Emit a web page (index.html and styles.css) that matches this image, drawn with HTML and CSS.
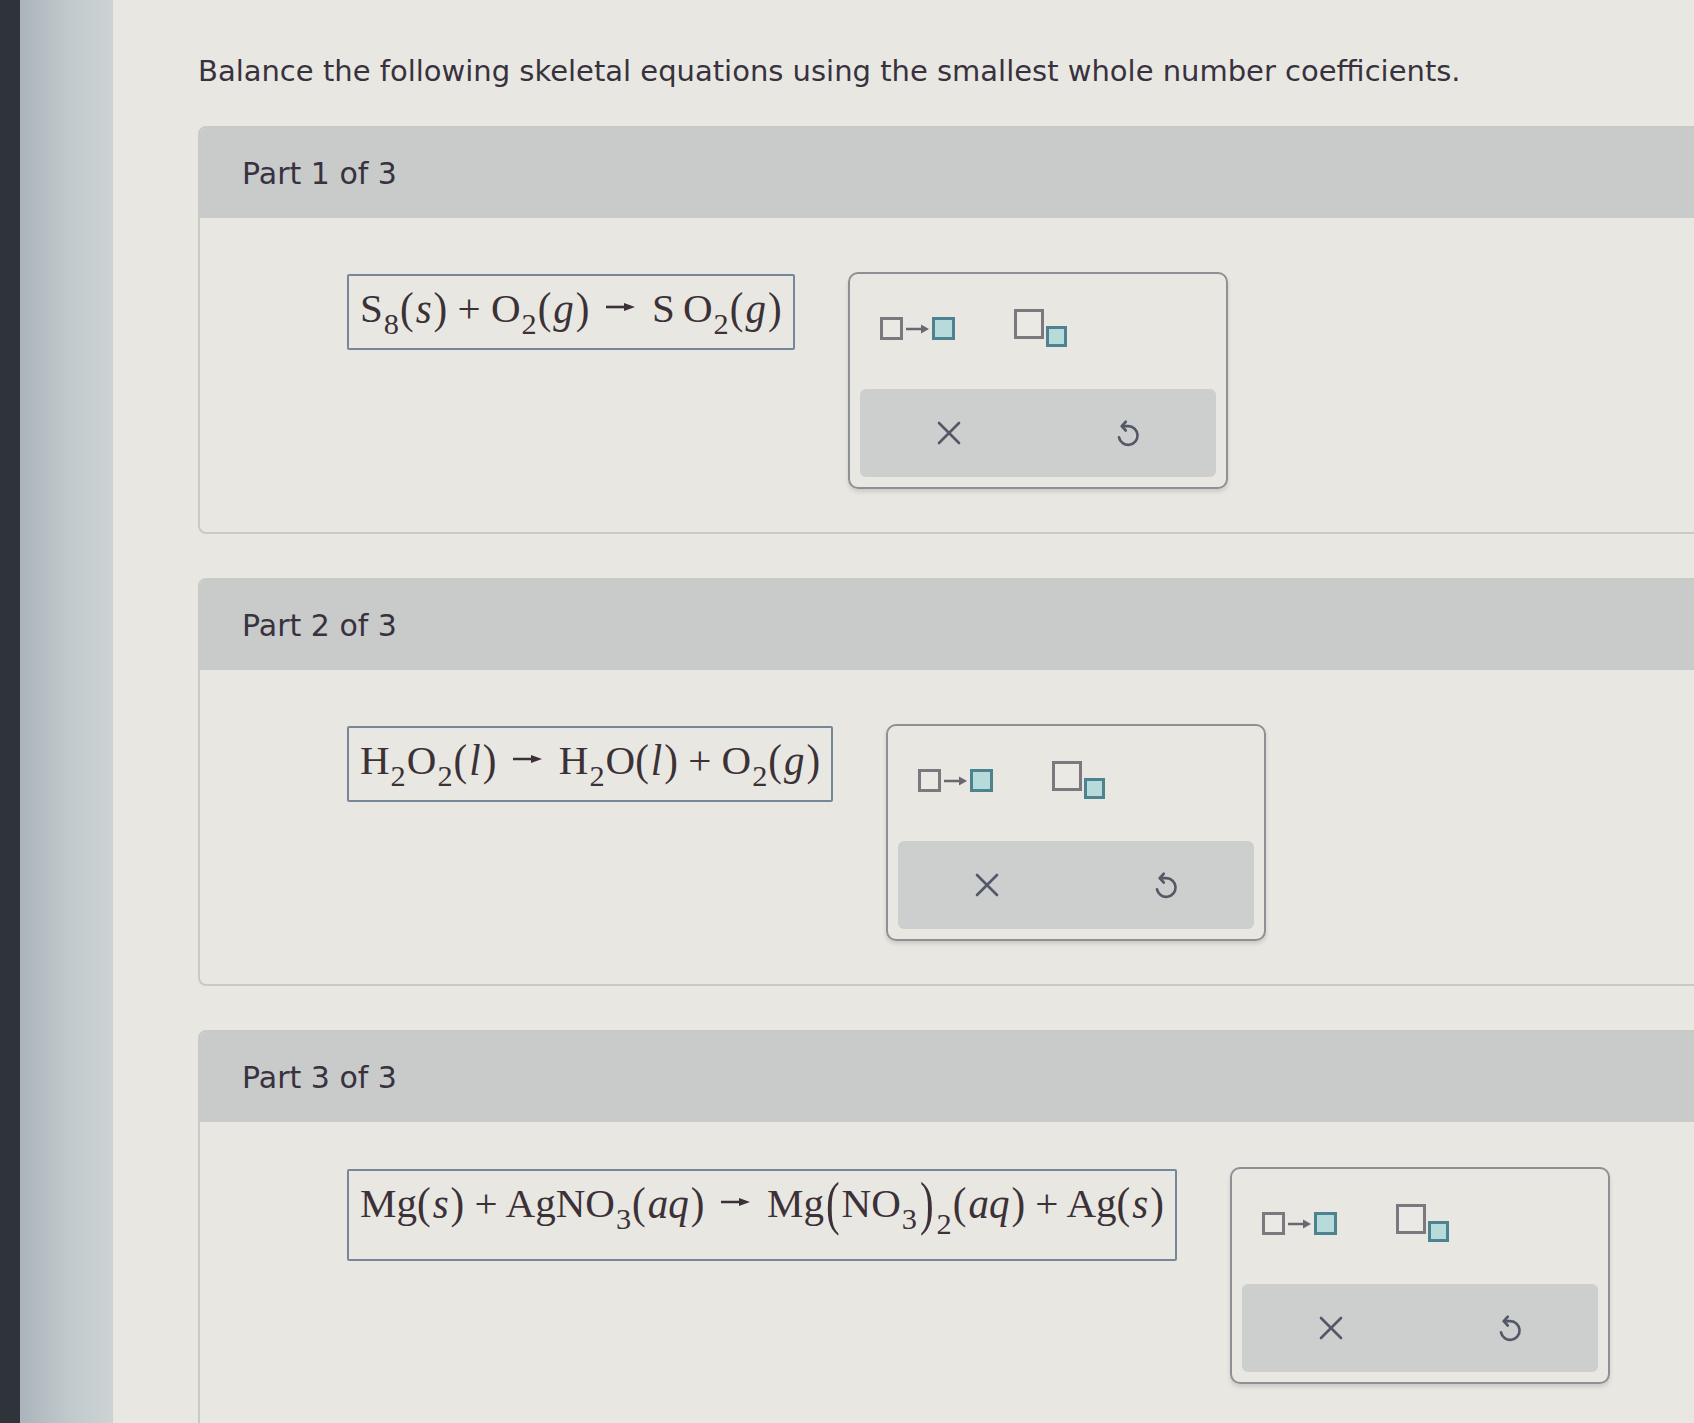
FILE: index.html
```html
<!DOCTYPE html>
<html lang="en">
<head>
    <meta charset="UTF-8">
    <meta name="viewport" content="width=device-width, initial-scale=1.0">
    <title>Balancing Equations</title>
    <link rel="stylesheet" href="styles.css">
</head>
<body>
    <div class="edge-dark"></div>
    <div class="edge-strip"></div>

    <main class="page">
        <p class="prompt">Balance the following skeletal equations using the smallest whole number coefficients.</p>

        <!-- Part 1 -->
        <section class="part">
            <div class="part-header">Part 1 of 3</div>
            <div class="part-body">
                <div class="equation">
                    S<sub>8</sub><span class="st">(<i>s</i>)</span> + O<sub>2</sub><span class="st">(<i>g</i>)</span>
                    <svg class="arrow" viewBox="0 0 30 10"><line x1="0" y1="5" x2="20" y2="5"/><polygon points="18,1 29,5 18,9"/></svg>
                    S&thinsp;O<sub>2</sub><span class="st">(<i>g</i>)</span>
                </div>
                <div class="toolbox">
                    <div class="tool-icons">
                        <svg class="ico-react" viewBox="0 0 76 24">
                            <rect class="empty" x="1.5" y="1.5" width="20" height="20"/>
                            <line x1="26" y1="12" x2="42" y2="12"/>
                            <polygon points="41,7.5 49,12 41,16.5"/>
                            <rect class="filled" x="53.5" y="1.5" width="20" height="20"/>
                        </svg>
                        <svg class="ico-sub" viewBox="0 0 56 40">
                            <rect class="empty" x="1.5" y="1.5" width="27" height="27"/>
                            <rect class="filled" x="33.5" y="18.5" width="18" height="18"/>
                        </svg>
                    </div>
                    <div class="tool-buttons">
                        <button class="tool-btn" title="Clear">
                            <svg viewBox="0 0 24 24"><path d="M4 4 L20 20 M20 4 L4 20"/></svg>
                        </button>
                        <button class="tool-btn" title="Undo">
                            <svg viewBox="0 0 24 24"><path d="M8 6.5 L13 6.5 A7.5 7.5 0 1 1 5.6 15.5"/><path d="M11 3 L7.8 6.5 L11 10"/></svg>
                        </button>
                    </div>
                </div>
            </div>
        </section>

        <!-- Part 2 -->
        <section class="part">
            <div class="part-header">Part 2 of 3</div>
            <div class="part-body">
                <div class="equation">
                    H<sub>2</sub>O<sub>2</sub><span class="st">(<i>l</i>)</span>
                    <svg class="arrow" viewBox="0 0 30 10"><line x1="0" y1="5" x2="20" y2="5"/><polygon points="18,1 29,5 18,9"/></svg>
                    H<sub>2</sub>O<span class="st">(<i>l</i>)</span> + O<sub>2</sub><span class="st">(<i>g</i>)</span>
                </div>
                <div class="toolbox">
                    <div class="tool-icons">
                        <svg class="ico-react" viewBox="0 0 76 24">
                            <rect class="empty" x="1.5" y="1.5" width="20" height="20"/>
                            <line x1="26" y1="12" x2="42" y2="12"/>
                            <polygon points="41,7.5 49,12 41,16.5"/>
                            <rect class="filled" x="53.5" y="1.5" width="20" height="20"/>
                        </svg>
                        <svg class="ico-sub" viewBox="0 0 56 40">
                            <rect class="empty" x="1.5" y="1.5" width="27" height="27"/>
                            <rect class="filled" x="33.5" y="18.5" width="18" height="18"/>
                        </svg>
                    </div>
                    <div class="tool-buttons">
                        <button class="tool-btn" title="Clear">
                            <svg viewBox="0 0 24 24"><path d="M4 4 L20 20 M20 4 L4 20"/></svg>
                        </button>
                        <button class="tool-btn" title="Undo">
                            <svg viewBox="0 0 24 24"><path d="M8 6.5 L13 6.5 A7.5 7.5 0 1 1 5.6 15.5"/><path d="M11 3 L7.8 6.5 L11 10"/></svg>
                        </button>
                    </div>
                </div>
            </div>
        </section>

        <!-- Part 3 -->
        <section class="part">
            <div class="part-header">Part 3 of 3</div>
            <div class="part-body tight">
                <div class="equation tall">
                    Mg<span class="st">(<i>s</i>)</span> + AgNO<sub>3</sub><span class="st">(<i>aq</i>)</span>
                    <svg class="arrow" viewBox="0 0 30 10"><line x1="0" y1="5" x2="20" y2="5"/><polygon points="18,1 29,5 18,9"/></svg>
                    Mg<span class="big-paren">(</span>NO<sub>3</sub><span class="big-paren">)</span><sub class="low">2</sub><span class="st">(<i>aq</i>)</span> + Ag<span class="st">(<i>s</i>)</span>
                </div>
                <div class="toolbox">
                    <div class="tool-icons">
                        <svg class="ico-react" viewBox="0 0 76 24">
                            <rect class="empty" x="1.5" y="1.5" width="20" height="20"/>
                            <line x1="26" y1="12" x2="42" y2="12"/>
                            <polygon points="41,7.5 49,12 41,16.5"/>
                            <rect class="filled" x="53.5" y="1.5" width="20" height="20"/>
                        </svg>
                        <svg class="ico-sub" viewBox="0 0 56 40">
                            <rect class="empty" x="1.5" y="1.5" width="27" height="27"/>
                            <rect class="filled" x="33.5" y="18.5" width="18" height="18"/>
                        </svg>
                    </div>
                    <div class="tool-buttons">
                        <button class="tool-btn" title="Clear">
                            <svg viewBox="0 0 24 24"><path d="M4 4 L20 20 M20 4 L4 20"/></svg>
                        </button>
                        <button class="tool-btn" title="Undo">
                            <svg viewBox="0 0 24 24"><path d="M8 6.5 L13 6.5 A7.5 7.5 0 1 1 5.6 15.5"/><path d="M11 3 L7.8 6.5 L11 10"/></svg>
                        </button>
                    </div>
                </div>
            </div>
        </section>
    </main>
</body>
</html>
```

FILE: styles.css
```css
html, body {
    height: 100%;
}
body {
    margin: 0;
    display: flex;
    overflow: hidden;
    background: #e9e7e1;
    font-family: "DejaVu Sans", Verdana, sans-serif;
    color: #38323f;
}
.edge-dark {
    width: 20px;
    flex: none;
    background: #2e343a;
}
.edge-strip {
    width: 93px;
    flex: none;
    background: linear-gradient(to right, #aab4ba, #c2cacd 55%, #cdd3d4);
}
.page {
    flex: 1;
    padding: 53px 0 0 85px;
    min-width: 0;
}
.prompt {
    font-size: 29px;
    margin: 0 0 37px 0;
    line-height: 36px;
}

/* part cards */
.part {
    margin: 0 -30px 44px 0;
    border: 2px solid #c9c9c6;
    border-radius: 8px;
    background: #e9e7e2;
    overflow: hidden;
}
.part-header {
    height: 90px;
    box-sizing: border-box;
    padding: 0 0 0 42px;
    display: flex;
    align-items: center;
    background: #c8cbca;
    font-size: 30px;
}
.part-body {
    height: 314px;
    box-sizing: border-box;
    padding: 56px 0 0 147px;
    display: flex;
    align-items: flex-start;
    gap: 53px;
}
.part-body.tight {
    padding-top: 47px;
}

/* equation box */
.equation {
    border: 2px solid #768799;
    border-radius: 2px;
    padding: 4px 11px 12px 11px;
    font-family: "Liberation Serif", "Times New Roman", serif;
    font-size: 41px;
    line-height: 56px;
    color: #3b3137;
    white-space: nowrap;
}
.equation.tall {
    padding-bottom: 28px;
}
.equation sub {
    font-size: 0.74em;
    vertical-align: -0.4em;
    line-height: 0;
    padding: 0 1px;
}
.equation sub.low {
    vertical-align: -0.55em;
}
.equation i {
    padding: 0 2px;
}
.st {
    display: inline-block;
    transform: scaleY(1.1);
}
.big-paren {
    display: inline-block;
    transform: scale(1, 1.45);
    padding: 0 2px;
}
.arrow {
    width: 30px;
    height: 10px;
    margin: 0 6px;
    vertical-align: 0.25em;
}
.arrow line {
    stroke: #3b3137;
    stroke-width: 2.6;
}
.arrow polygon {
    fill: #3b3137;
}

/* tool panel */
.toolbox {
    width: 380px;
    height: 217px;
    box-sizing: border-box;
    margin-top: -2px;
    border: 2px solid #8f9094;
    border-radius: 10px;
    padding: 12px 10px 10px 10px;
    box-shadow: 0 3px 4px rgba(0, 0, 0, 0.12);
    display: flex;
    flex-direction: column;
}
.tool-icons {
    height: 103px;
    box-sizing: border-box;
    padding: 31px 0 0 20px;
    display: flex;
    align-items: flex-start;
    gap: 58px;
}
.ico-react {
    width: 76px;
    height: 24px;
}
.ico-sub {
    width: 56px;
    height: 40px;
    margin-top: -8px;
}
.tool-icons rect {
    stroke-width: 3;
}
.tool-icons .empty {
    fill: #ebe9e4;
    stroke: #7d7880;
}
.tool-icons .filled {
    fill: #b7dadb;
    stroke: #4d8391;
}
.tool-icons line {
    stroke: #6b6670;
    stroke-width: 2.5;
}
.tool-icons polygon {
    fill: #6b6670;
}
.tool-buttons {
    flex: 1;
    display: grid;
    grid-template-columns: 1fr 1fr;
    background: #cdcfcf;
    border-radius: 6px;
}
.tool-btn {
    border: none;
    background: none;
    display: flex;
    align-items: center;
    justify-content: center;
    padding: 0;
}
.tool-btn svg {
    width: 30px;
    height: 30px;
    fill: none;
    stroke: #535866;
    stroke-width: 2.1;
    stroke-linecap: round;
    stroke-linejoin: round;
}
```
